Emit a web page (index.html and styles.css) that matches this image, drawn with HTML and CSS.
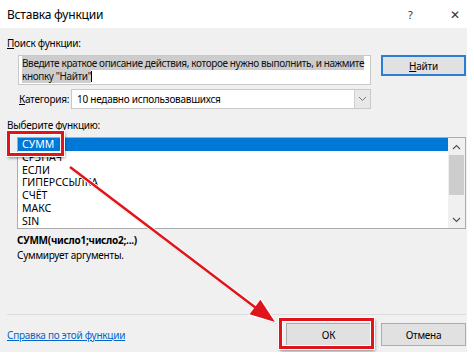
FILE: index.html
```html
<!DOCTYPE html>
<html>
<head>
  <meta charset="UTF-8">
  <title>Вставка функции</title>
  <link rel="stylesheet" href="styles.css">
</head>
<body>
  <div class="dialog">
    <div class="titlebar">
      <span class="title">Вставка функции</span>
      <span class="help">?</span>
      <span class="close">&#x2715;</span>
    </div>

    <div class="content">
      <div class="field-label"><u>П</u>оиск функции:</div>
      <div class="search-row">
        <div class="search-box">
          <span class="selected-text">Введите краткое описание действия, которое нужно выполнить, и нажмите кнопку "Найти"</span><span class="caret"></span>
        </div>
        <button class="btn btn-default"><u>Н</u>айти</button>
      </div>

      <div class="category-row">
        <span class="category-label"><u>К</u>атегория:</span>
        <div class="select">
          <span class="select-value">10 недавно использовавшихся</span>
          <span class="select-arrow">
            <svg width="9" height="6" viewBox="0 0 9 6"><path d="M1 1 L4.5 4.5 L8 1" fill="none" stroke="#777" stroke-width="1"/></svg>
          </span>
        </div>
      </div>

      <div class="field-label list-label">Выберите <u>ф</u>ункцию:</div>
      <div class="listbox">
        <div class="list-items">
          <div class="list-item active">СУММ</div>
          <div class="list-item">СРЗНАЧ</div>
          <div class="list-item">ЕСЛИ</div>
          <div class="list-item">ГИПЕРССЫЛКА</div>
          <div class="list-item">СЧЁТ</div>
          <div class="list-item">МАКС</div>
          <div class="list-item">SIN</div>
        </div>
        <div class="scrollbar">
          <span class="scroll-btn">
            <svg width="9" height="6" viewBox="0 0 9 6"><path d="M1 5 L4.5 1.5 L8 5" fill="none" stroke="#555" stroke-width="1.2"/></svg>
          </span>
          <span class="scroll-thumb"></span>
          <span class="scroll-rest"></span>
          <span class="scroll-btn">
            <svg width="9" height="6" viewBox="0 0 9 6"><path d="M1 1 L4.5 4.5 L8 1" fill="none" stroke="#555" stroke-width="1.2"/></svg>
          </span>
        </div>
      </div>

      <div class="description">
        <div class="syntax">СУММ(число1;число2;...)</div>
        <div class="summary">Суммирует аргументы.</div>
      </div>

      <div class="separator"></div>

      <div class="footer">
        <a class="help-link" href="#">Справка по этой функции</a>
        <div class="buttons">
          <button class="btn">ОК</button>
          <button class="btn">Отмена</button>
        </div>
      </div>
    </div>

    <!-- annotations drawn over the dialog -->
    <div class="mark mark-item"></div>
    <div class="mark mark-ok"></div>
    <svg class="arrow" width="474" height="357" viewBox="0 0 474 357">
      <g transform="translate(2 2)" opacity="0.3">
        <line x1="70" y1="167" x2="256" y2="308" stroke="#444" stroke-width="4"/>
        <polygon points="275,322 249.6,314.2 260.4,299.8" fill="#444"/>
      </g>
      <line x1="70" y1="167" x2="256" y2="308" stroke="#fff" stroke-width="4.5"/>
      <polygon points="277,323.5 248,316 261,297.5" fill="#fff"/>
      <line x1="70" y1="167" x2="256" y2="308" stroke="#e0151b" stroke-width="2.5"/>
      <polygon points="275,322 249.6,314.2 260.4,299.8" fill="#e0151b"/>
    </svg>
  </div>
</body>
</html>
```

FILE: styles.css
```css
body {
  margin: 0;
  background: #fff;
  font-family: "Noto Sans", "Open Sans", sans-serif;
  font-size: 10px;
  color: #000;
}
.dialog {
  position: relative;
  width: 467px;
  height: 352px;
  background: #f0f0f0;
}
.titlebar {
  height: 28px;
  background: #fff;
  display: flex;
  align-items: center;
  padding-left: 7px;
}
.title {
  font-size: 12px;
  letter-spacing: -0.2px;
  flex: 1;
}
.help {
  font-size: 11px;
  width: 42px;
  color: #333;
}
.close {
  font-size: 12px;
  width: 17px;
  color: #333;
}
.content {
  padding: 0 1px 0 7px;
  letter-spacing: -0.25px;
}
.field-label {
  line-height: 14px;
  padding-top: 8px;
}
.search-row {
  display: flex;
  align-items: flex-start;
  margin-top: 5px;
}
.search-box {
  margin-left: 11px;
  width: 345px;
  height: 27px;
  background: #fff;
  border: 1px solid #c8c8c8;
  padding: 1px 3px 0 3px;
  font-size: 10px;
  letter-spacing: -0.38px;
  line-height: 13px;
  color: #111;
}
.selected-text {
  background: #cdcdcd;
}
.caret {
  display: inline-block;
  width: 1px;
  height: 11px;
  background: #000;
  vertical-align: -2px;
}
.btn {
  font-family: inherit;
  font-size: 10px;
  letter-spacing: -0.25px;
  width: 85px;
  height: 23px;
  background: #e1e1e1;
  border: 1px solid #adadad;
  color: #000;
  padding: 0;
}
.btn-default {
  margin-left: 10px;
  height: 21px;
  border: 2px solid #2a7fd4;
}
.category-row {
  display: flex;
  align-items: center;
  margin-top: 4px;
}
.category-label {
  margin-left: 12px;
  width: 52px;
}
.select {
  display: flex;
  align-items: center;
  width: 298px;
  height: 18px;
  background: #fff;
  border: 1px solid #c8c8c8;
}
.select-value {
  flex: 1;
  padding-left: 5px;
}
.select-arrow {
  display: flex;
  align-items: center;
  justify-content: center;
  width: 15px;
  height: 18px;
  background: #e8e8e8;
  border-left: 1px solid #d0d0d0;
}
.list-label {
  padding-top: 9px;
}
.listbox {
  display: flex;
  margin: 5px 0 0 10px;
  height: 90px;
  background: #fff;
  border: 1px solid #acacac;
}
.list-items {
  flex: 1;
}
.list-item {
  height: 12.8px;
  line-height: 12.8px;
  padding-left: 4px;
  font-size: 10.5px;
  letter-spacing: 0;
}
.list-item.active {
  background: #0078d7;
  color: #fff;
}
.scrollbar {
  width: 17px;
  display: flex;
  flex-direction: column;
  background: #f0f0f0;
}
.scroll-btn {
  height: 17px;
  display: flex;
  align-items: center;
  justify-content: center;
}
.scroll-thumb {
  height: 40px;
  margin: 0 1px;
  background: #cdcdcd;
}
.scroll-rest {
  flex: 1;
}
.description {
  margin: 4px 0 0 10px;
}
.syntax {
  font-weight: bold;
  line-height: 14px;
}
.summary {
  line-height: 15px;
  margin-top: 1px;
}
.separator {
  margin-top: 51px;
  height: 1px;
  background: #dcdcdc;
}
.footer {
  display: flex;
  align-items: center;
  justify-content: space-between;
  margin-top: 8px;
}
.help-link {
  color: #0066cc;
  text-decoration: underline;
}
.buttons {
  display: flex;
  gap: 10px;
}
.mark {
  position: absolute;
  border: 3px solid #e0151b;
  box-shadow: inset 0 0 0 1px #fff, 0 0 0 1px #fff, 1px 2px 3px rgba(0, 0, 0, 0.45);
}
.mark-item {
  left: 7px;
  top: 131px;
  width: 51px;
  height: 19px;
}
.mark-ok {
  left: 279px;
  top: 318px;
  width: 89px;
  height: 25px;
}
.arrow {
  position: absolute;
  left: 0;
  top: 0;
  pointer-events: none;
}
```
